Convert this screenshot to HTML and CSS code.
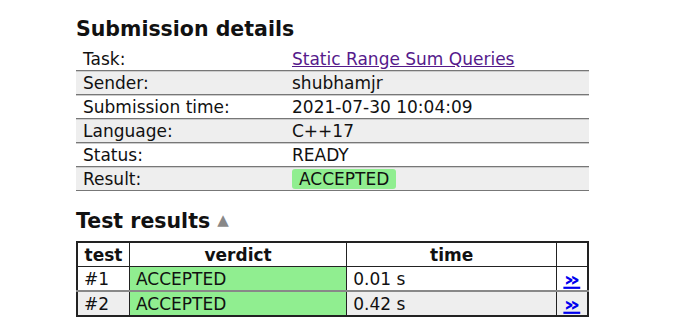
FILE: index.html
```html
<!DOCTYPE html>
<html>
<head>
<meta charset="utf-8">
<link rel="stylesheet" href="styles.css">
</head>
<body>
<div class="content">
  <h2 class="title">Submission details</h2>
  <table class="summary">
    <tr><td class="label">Task:</td><td><a href="#" class="task-link">Static Range Sum Queries</a></td></tr>
    <tr class="alt"><td class="label">Sender:</td><td>shubhamjr</td></tr>
    <tr><td class="label">Submission time:</td><td>2021-07-30 10:04:09</td></tr>
    <tr class="alt"><td class="label">Language:</td><td>C++17</td></tr>
    <tr><td class="label">Status:</td><td>READY</td></tr>
    <tr class="alt"><td class="label">Result:</td><td><span class="badge">ACCEPTED</span></td></tr>
  </table>
  <h3 class="subtitle">Test results <span class="arrow">▲</span></h3>
  <table class="tests">
    <tr><th class="c-test">test</th><th class="c-verdict">verdict</th><th class="c-time">time</th><th class="c-link"></th></tr>
    <tr><td>#1</td><td class="ok">ACCEPTED</td><td>0.01 s</td><td class="c-link"><a href="#" class="more">»</a></td></tr>
    <tr class="alt"><td>#2</td><td class="ok">ACCEPTED</td><td>0.42 s</td><td class="c-link"><a href="#" class="more">»</a></td></tr>
  </table>
</div>
</body>
</html>
```
FILE: styles.css
```css
html, body {
  margin: 0;
  padding: 0;
  background: #fff;
}
body {
  font-family: "DejaVu Sans", Verdana, sans-serif;
  font-size: 17px;
  color: #111;
}
.content {
  width: 513px;
  margin-left: 76px;
  padding-top: 16px;
}
.title {
  font-size: 20.5px;
  font-weight: bold;
  margin: 0 0 5px 0;
  line-height: 26px;
}
.summary {
  width: 100%;
  border-collapse: separate;
  border-spacing: 0;
}
.summary td {
  height: 22px;
  padding: 0 7px;
  line-height: 22px;
  border-bottom: 1px solid #777;
  border-top: 1px solid #ccc;
}
.summary tr:first-child td {
  border-top: 0;
  height: 23px;
}
.summary td.label {
  width: 195px;
}
.summary tr.alt td {
  background: #eee;
}
.task-link {
  color: #551a8b;
}
.badge {
  display: inline-block;
  background: #90ee90;
  border-radius: 3px;
  padding: 0 7px;
  line-height: 20px;
}
.subtitle {
  font-size: 20.5px;
  font-weight: bold;
  margin: 17px 0 8px 0;
  line-height: 24px;
}
.arrow {
  font-size: 15px;
  color: #888;
  vertical-align: 3px;
}
.tests {
  width: 100%;
  border-collapse: collapse;
  border: 2px solid #222;
}
.tests th, .tests td {
  border: 1px solid #222;
  height: 23px;
  line-height: 22px;
  padding: 0 6px;
  text-align: left;
}
.tests th {
  text-align: center;
  font-weight: bold;
}
.tests tr.alt td {
  background: #eee;
  border-top: 2px solid #888;
}
.tests td.ok, .tests tr.alt td.ok {
  background: #90ee90;
}
.c-test { width: 39px; }
.c-verdict { width: 205px; }
.c-time { width: 198px; }
.c-link { width: 18px; text-align: center; }
.tests td.c-link { text-align: center; padding: 0 4px; line-height: 16px; }
.more {
  display: inline-block;
  color: #0000ee;
  font-weight: bold;
  font-size: 18px;
  line-height: 16px;
  height: 16px;
  vertical-align: middle;
  text-decoration: underline;
  text-decoration-thickness: 1.5px;
  transform: scale(1.45, 1.1);
}
```
